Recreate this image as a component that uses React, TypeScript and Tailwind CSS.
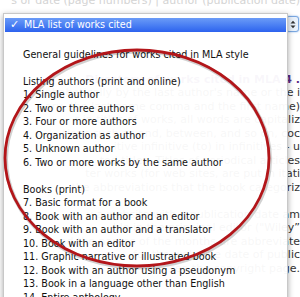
import React from "react";

const items: (string | null)[] = [
  null,
  "General guidelines for works cited in MLA style",
  null,
  "Listing authors (print and online)",
  "1. Single author",
  "2. Two or three authors",
  "3. Four or more authors",
  "4. Organization as author",
  "5. Unknown author",
  "6. Two or more works by the same author",
  null,
  "Books (print)",
  "7. Basic format for a book",
  "8. Book with an author and an editor",
  "9. Book with an author and a translator",
  "10. Book with an editor",
  "11. Graphic narrative or illustrated book",
  "12. Book with an author using a pseudonym",
  "13. Book in a language other than English",
  "14. Entire anthology",
];

const pageLines: { t: string; cls?: string }[] = [
  { t: "" },
  { t: "" },
  { t: "" },
  { t: "" },
  { t: "Directory of works cited in MLA 4 .", cls: "text-[#5b2a86] font-bold" },
  { t: "lphabetically by the last author's name or the i" },
  { t: "ary, the last name comma and the first name)" },
  { t: "r in titles of works, all words are capitaliz" },
  { t: "tions such as and, between, and so on, coc" },
  { t: "itive infinitive (to) in infinitives - u" },
  { t: "ted titles. Titles of periodical articles" },
  { t: "ter works (for web sites, are put in itati" },
  { t: "the abbreviations that the book categoriz" },
  { t: "" },
  { t: "y a website with a publication date am" },
  { t: "ble in the principal editor (\"Wiley\u201D" },
  { t: "nd the names of the months are abbreviate" },
  { t: "for the web, the date of public" },
  { t: "see the copyright page." },
  { t: "" },
  { t: "." },
];

export default function App() {
  return (
    <div
      className="relative w-[300px] h-[297px] overflow-hidden bg-white"
      style={{ fontFamily: '"DejaVu Sans", "Liberation Sans", sans-serif' }}
    >
      {/* page behind */}
      <div className="flex flex-col items-end text-[11px] leading-[13.5px] text-[#333]">
        <div className="h-[13.5px] whitespace-nowrap text-[#d4d4d4] -mt-[6px]">
          s or date (page numbers) | author (publication date)
        </div>
        <div className="h-[11px]" />
        {pageLines.map((l, i) => (
          <div key={i} className={`h-[13.5px] whitespace-nowrap ${l.cls ?? ""}`}>
            {l.t}
          </div>
        ))}
      </div>

      {/* select box behind menu */}
      <div className="absolute left-[286px] top-[16px] w-[13px] h-[16px] rounded-[3px] border border-[#7aa7e0] bg-[#e9f1fb] shadow-[0_0_2px_#8ab4ea] flex items-center justify-center">
        <svg width="6" height="9" viewBox="0 0 6 9">
          <path d="M0.5 3.5 L3 0.8 L5.5 3.5 Z" fill="#333" />
          <path d="M0.5 5.5 L3 8.2 L5.5 5.5 Z" fill="#333" />
        </svg>
      </div>

      {/* dropdown menu */}
      <div className="absolute left-[3px] top-[13px] w-[285px] h-[300px] bg-white/[0.96] border-l border-t border-r border-[#c8c8c8] shadow-[0_2px_6px_rgba(0,0,0,0.35)] pt-[4px] text-[9.6px] text-[#111]">
        <div className="flex items-center h-[13.5px] mx-[1px] bg-gradient-to-b from-[#6b9bf7] to-[#2d62ee] text-white">
          <span className="w-[19px] pl-[5px] text-[11px] leading-none">✓</span>
          <span>MLA list of works cited</span>
        </div>
        <div className="h-[3px]" />
        {items.map((t, i) => (
          <div key={i} className="flex items-center h-[13.5px] pl-[19px] whitespace-nowrap">
            {t}
          </div>
        ))}
      </div>

      {/* red circle annotation */}
      <svg className="absolute left-0 top-0" width="300" height="297" viewBox="0 0 300 297">
        <ellipse
          cx="137"
          cy="158"
          rx="132"
          ry="108"
          fill="none"
          stroke="rgba(0,0,0,0.18)"
          strokeWidth="4"
          transform="translate(1 1.5)"
        />
        <ellipse cx="137" cy="158" rx="132" ry="108" fill="none" stroke="#b3161a" strokeWidth="2.8" />
      </svg>
    </div>
  );
}
